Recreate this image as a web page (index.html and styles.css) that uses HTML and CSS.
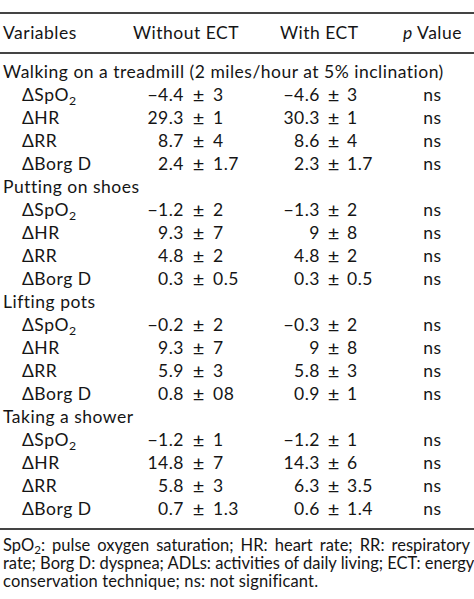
FILE: index.html
```html
<!DOCTYPE html>
<html lang="en">
<head>
<meta charset="utf-8">
<title>Table</title>
<link rel="stylesheet" href="styles.css">
</head>
<body>
<div class="caption"><div class="caption-text">Comparison of physiological parameters during ADLs.</div></div>
<div class="table">
  <div class="thead">
    <div class="h-var">Variables</div>
    <div class="h-wo">Without ECT</div>
    <div class="h-w">With ECT</div>
    <div class="h-p"><i>p</i> Value</div>
  </div>
  <div class="tbody">
    <div class="sec">Walking on a treadmill (2 miles/hour at 5% inclination)</div>
    <div class="var">ΔSpO<sub>2</sub></div><div class="n">−4.4</div><div class="pm">±</div><div class="v">3</div><div class="n">−4.6</div><div class="pm">±</div><div class="v">3</div><div class="p">ns</div>
    <div class="var">ΔHR</div><div class="n">29.3</div><div class="pm">±</div><div class="v">1</div><div class="n">30.3</div><div class="pm">±</div><div class="v">1</div><div class="p">ns</div>
    <div class="var">ΔRR</div><div class="n">8.7</div><div class="pm">±</div><div class="v">4</div><div class="n">8.6</div><div class="pm">±</div><div class="v">4</div><div class="p">ns</div>
    <div class="var">ΔBorg D</div><div class="n">2.4</div><div class="pm">±</div><div class="v">1.7</div><div class="n">2.3</div><div class="pm">±</div><div class="v">1.7</div><div class="p">ns</div>

    <div class="sec">Putting on shoes</div>
    <div class="var">ΔSpO<sub>2</sub></div><div class="n">−1.2</div><div class="pm">±</div><div class="v">2</div><div class="n">−1.3</div><div class="pm">±</div><div class="v">2</div><div class="p">ns</div>
    <div class="var">ΔHR</div><div class="n">9.3</div><div class="pm">±</div><div class="v">7</div><div class="n">9</div><div class="pm">±</div><div class="v">8</div><div class="p">ns</div>
    <div class="var">ΔRR</div><div class="n">4.8</div><div class="pm">±</div><div class="v">2</div><div class="n">4.8</div><div class="pm">±</div><div class="v">2</div><div class="p">ns</div>
    <div class="var">ΔBorg D</div><div class="n">0.3</div><div class="pm">±</div><div class="v">0.5</div><div class="n">0.3</div><div class="pm">±</div><div class="v">0.5</div><div class="p">ns</div>

    <div class="sec">Lifting pots</div>
    <div class="var">ΔSpO<sub>2</sub></div><div class="n">−0.2</div><div class="pm">±</div><div class="v">2</div><div class="n">−0.3</div><div class="pm">±</div><div class="v">2</div><div class="p">ns</div>
    <div class="var">ΔHR</div><div class="n">9.3</div><div class="pm">±</div><div class="v">7</div><div class="n">9</div><div class="pm">±</div><div class="v">8</div><div class="p">ns</div>
    <div class="var">ΔRR</div><div class="n">5.9</div><div class="pm">±</div><div class="v">3</div><div class="n">5.8</div><div class="pm">±</div><div class="v">3</div><div class="p">ns</div>
    <div class="var">ΔBorg D</div><div class="n">0.8</div><div class="pm">±</div><div class="v">08</div><div class="n">0.9</div><div class="pm">±</div><div class="v">1</div><div class="p">ns</div>

    <div class="sec">Taking a shower</div>
    <div class="var">ΔSpO<sub>2</sub></div><div class="n">−1.2</div><div class="pm">±</div><div class="v">1</div><div class="n">−1.2</div><div class="pm">±</div><div class="v">1</div><div class="p">ns</div>
    <div class="var">ΔHR</div><div class="n">14.8</div><div class="pm">±</div><div class="v">7</div><div class="n">14.3</div><div class="pm">±</div><div class="v">6</div><div class="p">ns</div>
    <div class="var">ΔRR</div><div class="n">5.8</div><div class="pm">±</div><div class="v">3</div><div class="n">6.3</div><div class="pm">±</div><div class="v">3.5</div><div class="p">ns</div>
    <div class="var">ΔBorg D</div><div class="n">0.7</div><div class="pm">±</div><div class="v">1.3</div><div class="n">0.6</div><div class="pm">±</div><div class="v">1.4</div><div class="p">ns</div>
  </div>
</div>
<div class="note">
  <span class="line">SpO<sub>2</sub>: pulse oxygen saturation; HR: heart rate; RR: respiratory</span>
  <span class="line">rate; Borg D: dyspnea; ADLs: activities of daily living; ECT: energy</span>
  <span class="line last">conservation technique; ns: not significant.</span>
</div>
</body>
</html>
```
FILE: styles.css
```css
html, body {
  margin: 0;
  padding: 0;
  background: #fff;
}

body {
  font-family: Lato, "Open Sans", "DejaVu Sans", sans-serif;
  font-size: 17.5px;
  letter-spacing: 0.5px;
  color: #151515;
}

.caption {
  height: 5px;
  overflow: hidden;
}

.caption-text {
  margin-top: -20px;
  line-height: 18px;
  padding-left: 3px;
  white-space: nowrap;
  color: #666;
}

.table {
  margin-top: 7px;
  border-top: 2px solid #444;
  border-bottom: 2px solid #444;
}

.thead,
.tbody {
  display: grid;
  grid-template-columns: 130px 54px 29px 52px 55px 27px 48px 75px;
  line-height: 23px;
}

.thead {
  padding: 7px 0 8px;
  border-bottom: 2px solid #444;
}

.tbody {
  padding: 6px 0 8px;
}

.h-var {
  padding-left: 3px;
}

.h-wo {
  grid-column: span 3;
  padding-left: 3px;
}

.h-w {
  grid-column: span 3;
  padding-left: 15px;
}

.h-p {
  text-align: center;
  white-space: nowrap;
}

.sec {
  grid-column: 1 / -1;
  padding-left: 3px;
  white-space: nowrap;
}

.var {
  padding-left: 22px;
  white-space: nowrap;
}

.n {
  text-align: right;
}

.pm {
  text-align: center;
  font-size: 20px;
  letter-spacing: 0;
}

.v {
  text-align: left;
}

.p {
  text-align: center;
}

sub {
  font-size: 0.7em;
  line-height: 0;
  vertical-align: -0.3em;
}

.note {
  margin-top: 6px;
  padding: 0 4px 0 3px;
  font-size: 16.5px;
  letter-spacing: 0;
  line-height: 18px;
}

.line {
  display: block;
  text-align: justify;
  text-align-last: justify;
  white-space: nowrap;
}

.line.last {
  text-align: left;
  text-align-last: left;
  letter-spacing: 0.15px;
}
```
